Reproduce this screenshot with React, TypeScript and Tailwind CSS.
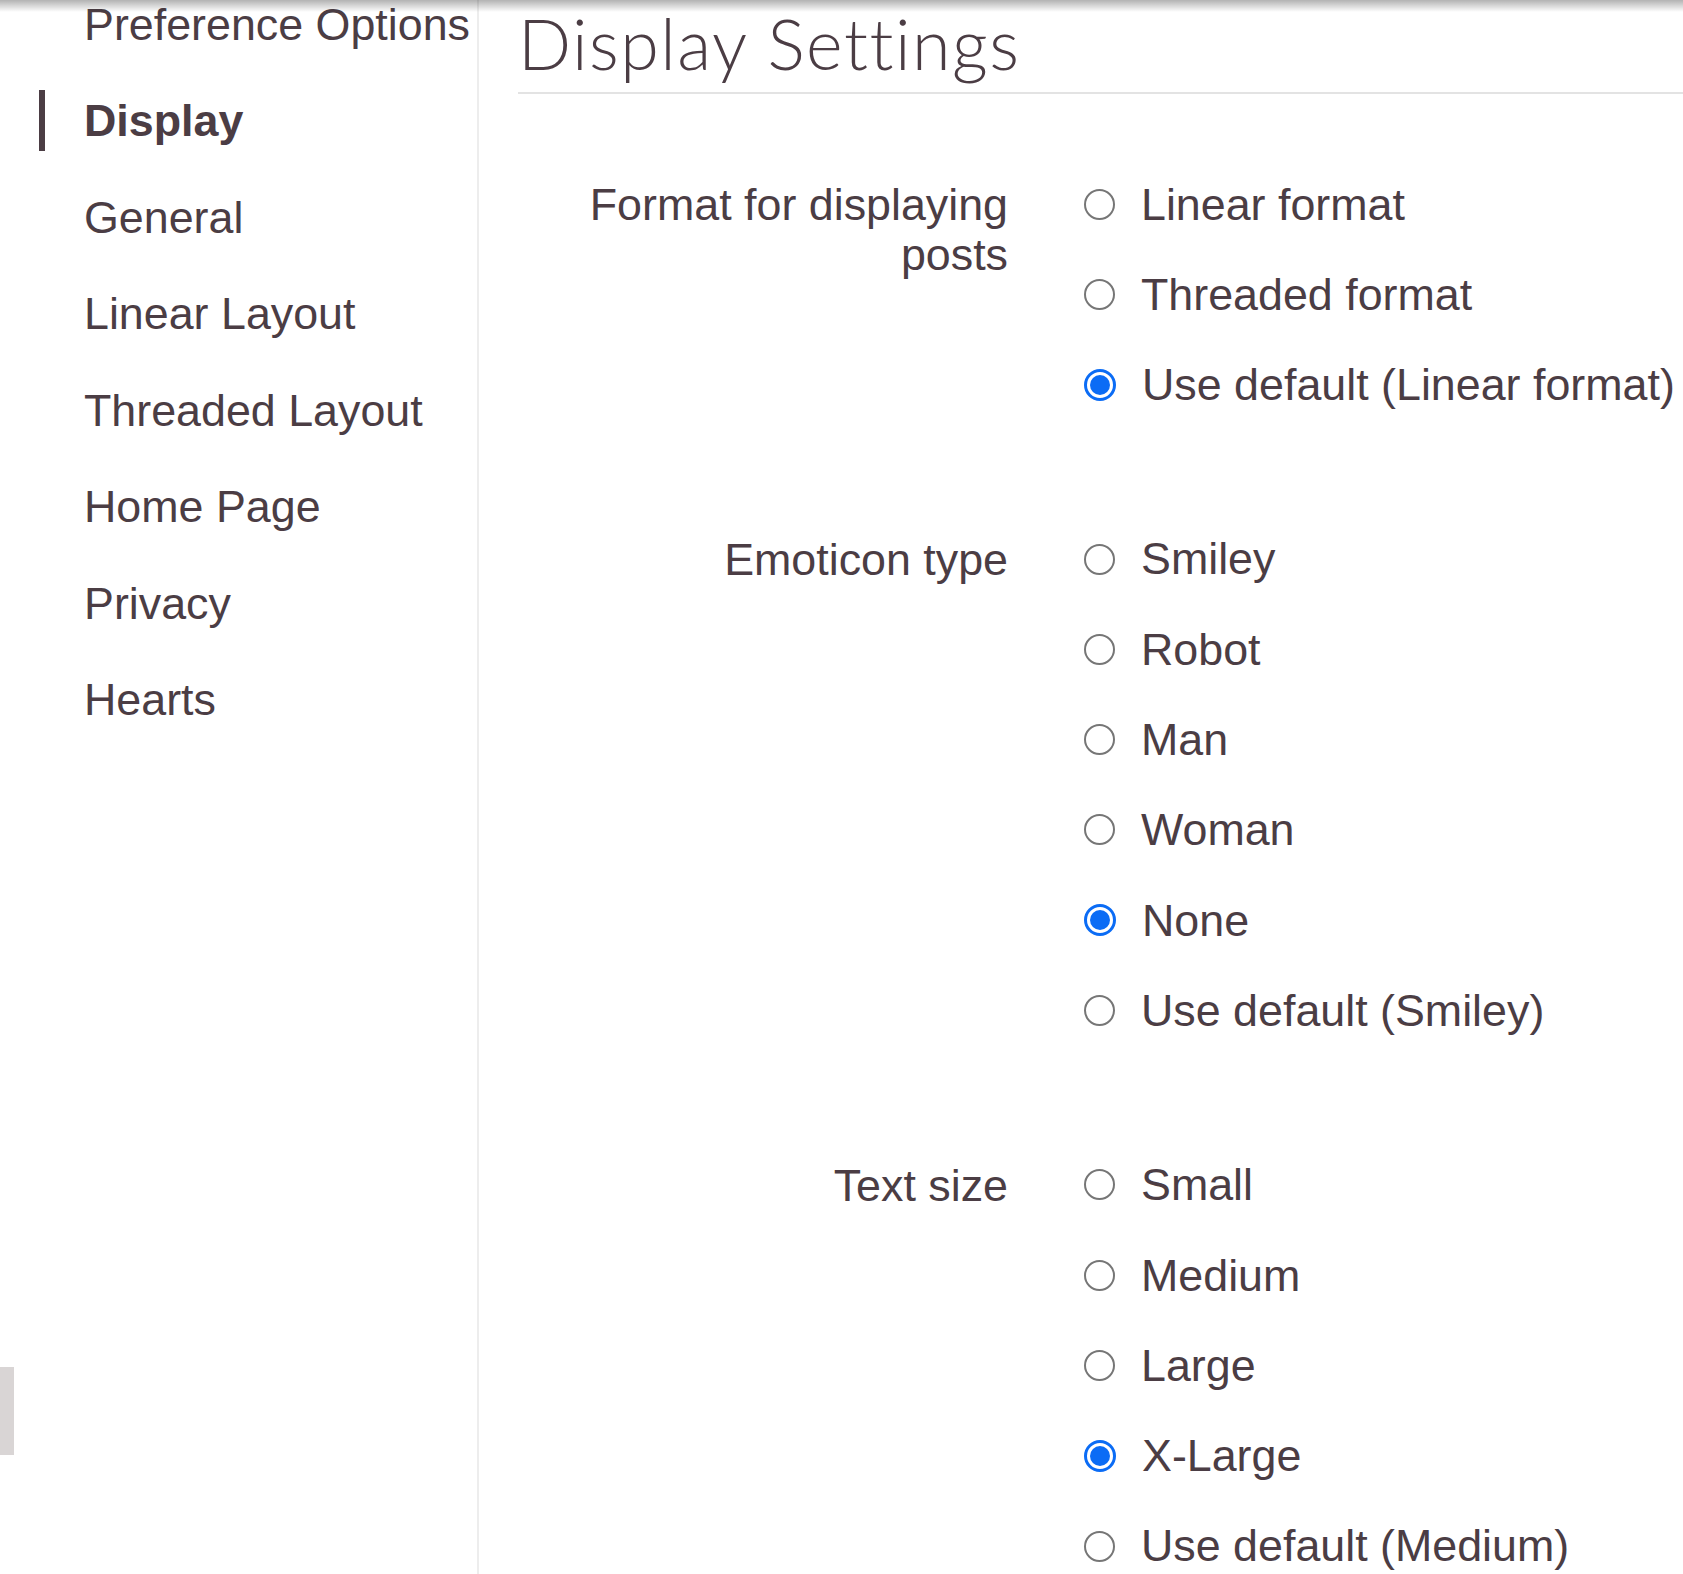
import React from "react";

// --- DATA ---
const NAV = [
  { label: "Preference Options", active: false },
  { label: "Display", active: true },
  { label: "General", active: false },
  { label: "Linear Layout", active: false },
  { label: "Threaded Layout", active: false },
  { label: "Home Page", active: false },
  { label: "Privacy", active: false },
  { label: "Hearts", active: false },
];

const GROUPS = [
  {
    label: "Format for displaying posts",
    options: ["Linear format", "Threaded format", "Use default (Linear format)"],
    checked: 2,
  },
  {
    label: "Emoticon type",
    options: ["Smiley", "Robot", "Man", "Woman", "None", "Use default (Smiley)"],
    checked: 4,
  },
  {
    label: "Text size",
    options: ["Small", "Medium", "Large", "X-Large", "Use default (Medium)"],
    checked: 3,
  },
];

const Radio = ({ checked }: { checked: boolean }) =>
  checked ? (
    <span className="flex h-[32px] w-[32px] shrink-0 items-center justify-center rounded-full border-[3px] border-[#0b6cf5] bg-white">
      <span className="h-[20px] w-[20px] rounded-full bg-[#0b6cf5]" />
    </span>
  ) : (
    <span className="h-[31px] w-[31px] shrink-0 rounded-full border-2 border-[#767676] bg-white" />
  );

export default function App() {
  return (
    <div className="relative h-[1574px] w-full overflow-hidden bg-white font-['Liberation_Sans',Arial,sans-serif] text-[44.8px] text-[#4b3d44]">
      {/* header shadow */}
      <div className="pointer-events-none absolute inset-x-0 top-0 z-10 h-[12px] bg-gradient-to-b from-black/30 to-transparent" />

      <div className="flex h-full">
        {/* SIDEBAR */}
        <nav className="w-[479px] shrink-0 border-r-2 border-[#ededed]">
          <ul className="-mt-[24px]">
            {NAV.map((item) => (
              <li key={item.label} className="flex h-[96.5px] items-center">
                {item.active ? (
                  <a className="ml-[39px] border-l-[6px] border-[#4b3d44] pl-[39px] font-bold leading-[61px]">
                    {item.label}
                  </a>
                ) : (
                  <a className="pl-[84px] leading-[61px] whitespace-nowrap">{item.label}</a>
                )}
              </li>
            ))}
          </ul>
        </nav>

        {/* MAIN */}
        <main className="min-w-0 flex-1 pl-[39px]">
          <h1 className="border-b-2 border-[#e3e3e3] pt-[8px] pb-[14px] font-['Lato',sans-serif] text-[70px] font-light leading-[70px] tracking-[1.5px] whitespace-nowrap">
            Display Settings
          </h1>

          <div className="mt-[65px] flex flex-col gap-[84px]">
            {GROUPS.map((group) => (
              <div key={group.label} className="flex">
                <div className="w-[490px] shrink-0 pt-[20px] text-right leading-[50px]">{group.label}</div>
                <div className="ml-[76px] flex flex-col">
                  {group.options.map((opt, i) => (
                    <label key={opt} className="flex h-[90.3px] items-center gap-[26px] whitespace-nowrap">
                      <Radio checked={i === group.checked} />
                      <span>{opt}</span>
                    </label>
                  ))}
                </div>
              </div>
            ))}
          </div>
        </main>
      </div>

      {/* feedback tab */}
      <div className="absolute left-0 top-[1367px] h-[88px] w-[14px] bg-[#d9d5d5]" />
    </div>
  );
}
